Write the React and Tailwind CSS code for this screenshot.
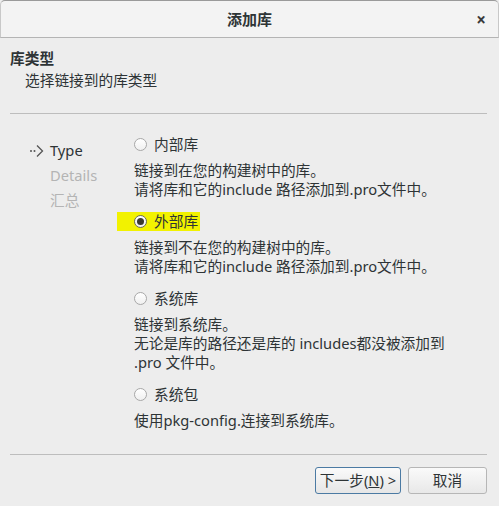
import React from "react";

const Radio = ({ checked }) => (
  <span
    className={
      "inline-flex items-center justify-center w-[13px] h-[13px] rounded-full border bg-gradient-to-b from-white to-[#f0f0f0] " +
      (checked ? "border-[#6a6a5a]" : "border-[#a8a8a8]")
    }
  >
    {checked && <span className="w-[7px] h-[7px] rounded-full bg-[#3a3a30]" />}
  </span>
);

const Option = ({ label, checked, highlight, lines }) => (
  <div className="flex flex-col">
    <div className="relative flex items-center gap-[8px] h-[20px]">
      {highlight && (
        <span className="absolute left-[-17px] top-[1px] w-[83px] h-[19px] bg-[#f2f200]" />
      )}
      <span className="relative flex items-center gap-[7px]">
        <Radio checked={checked} />
        <span>{label}</span>
      </span>
    </div>
    <div className="mt-[7px] mb-[12px] leading-[19px]">
      {lines.map((l, i) => (
        <div key={i}>{l}</div>
      ))}
    </div>
  </div>
);

const NavArrow = () => (
  <svg width="17" height="14" viewBox="0 0 17 14" className="text-[#555]">
    <circle cx="2" cy="7" r="1" fill="currentColor" />
    <circle cx="5.5" cy="7" r="1" fill="currentColor" />
    <path d="M8 1.5 L13.5 7 L8 12.5" fill="none" stroke="currentColor" strokeWidth="1.3" />
  </svg>
);

export default function App() {
  return (
    <div
      className="w-[499px] h-[506px] bg-[#ededed] text-[#2e3436] text-[14.7px] leading-[19px] flex flex-col overflow-hidden"
      style={{ fontFamily: '"Noto Sans", "Noto Sans CJK SC", sans-serif' }}
    >
      {/* title bar */}
      <div className="relative h-[38px] shrink-0 bg-[#f3f3f3] border-t border-x border-b border-t-[#9a9a9a] border-x-[#c8c8c8] border-b-[#b4b4b4] rounded-t-[5px] flex items-center justify-center">
        <span className="font-bold text-[15px]">添加库</span>
        <span className="absolute right-[12px] top-[10px] text-[17px] font-bold text-[#3a3a3a] leading-none">×</span>
      </div>

      {/* header */}
      <div className="px-[10px] pt-[11px]">
        <div className="font-bold">库类型</div>
        <div className="pl-[15px] mt-[3px]">选择链接到的库类型</div>
      </div>
      <div className="ml-[10px] mr-[12px] mt-[23px] border-t border-[#bdbdbd]" />

      {/* body */}
      <div className="flex flex-1">
        <div className="w-[124px] pl-[29px] pt-[27px] flex flex-col gap-[6px]">
          <div className="flex items-center gap-[4px] h-[19px]">
            <NavArrow />
            <span>Type</span>
          </div>
          <div className="pl-[21px] text-[#b4b4b4]">Details</div>
          <div className="pl-[21px] text-[#b4b4b4]">汇总</div>
        </div>
        <div className="flex-1 pl-[10px] pt-[20px]">
          <Option
            label="内部库"
            lines={["链接到在您的构建树中的库。", "请将库和它的include 路径添加到.pro文件中。"]}
          />
          <Option
            label="外部库"
            checked
            highlight
            lines={["链接到不在您的构建树中的库。", "请将库和它的include 路径添加到.pro文件中。"]}
          />
          <Option
            label="系统库"
            lines={["链接到系统库。", "无论是库的路径还是库的 includes都没被添加到", ".pro 文件中。"]}
          />
          <Option label="系统包" lines={["使用pkg-config.连接到系统库。"]} />
        </div>
      </div>

      {/* footer */}
      <div className="ml-[10px] mr-[12px] border-t border-[#bdbdbd]" />
      <div className="flex justify-end gap-[7px] pr-[12px] pt-[12px] pb-[12px]">
        <button className="w-[86px] h-[27px] rounded-[3px] border border-[#4b7aa3] bg-gradient-to-b from-[#fafafa] to-[#e6e6e6] text-[#2e3436]">
          下一步(<span className="underline">N</span>) &gt;
        </button>
        <button className="w-[79px] h-[27px] rounded-[3px] border border-[#b6b6b6] bg-gradient-to-b from-[#fafafa] to-[#e8e8e8] text-[#2e3436]">
          取消
        </button>
      </div>
    </div>
  );
}
